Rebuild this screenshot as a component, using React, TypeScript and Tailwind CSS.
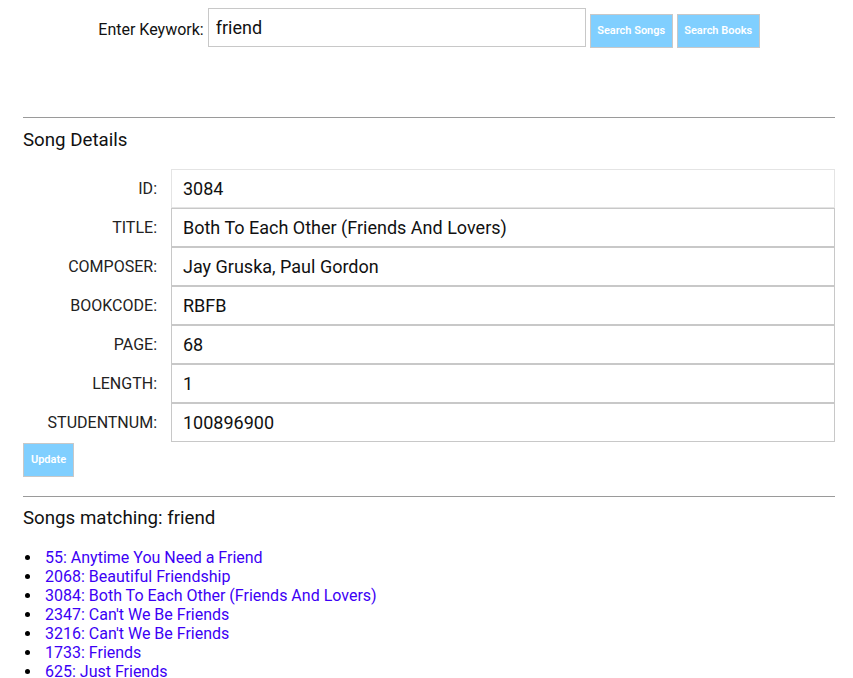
import { useState } from 'react';

const fields: [string, string][] = [
  ['ID', '3084'],
  ['TITLE', 'Both To Each Other (Friends And Lovers)'],
  ['COMPOSER', 'Jay Gruska, Paul Gordon'],
  ['BOOKCODE', 'RBFB'],
  ['PAGE', '68'],
  ['LENGTH', '1'],
  ['STUDENTNUM', '100896900'],
];

const songs = [
  '55: Anytime You Need a Friend',
  '2068: Beautiful Friendship',
  '3084: Both To Each Other (Friends And Lovers)',
  '2347: Can\'t We Be Friends',
  '3216: Can\'t We Be Friends',
  '1733: Friends',
  '625: Just Friends',
];

const btn =
  'h-[34px] px-0 whitespace-nowrap bg-[#80cfff] border border-[#c8c8c8] text-white text-[11px] font-semibold';

export default function App() {
  const [keyword, setKeyword] = useState('friend');

  return (
    <div className="min-h-screen bg-white pl-[23px] pr-[18px] text-[#111] font-['Roboto',sans-serif]">
      <div className="flex justify-center items-start pt-[8px]">
        <label className="text-[16px] mt-[10px] mr-[4px]">Enter Keywork:</label>
        <input
          value={keyword}
          onChange={(e) => setKeyword(e.target.value)}
          className="w-[378px] h-[39px] border border-[#c8c8c8] px-[7px] text-[18px] outline-none"
        />
        <button className={`${btn} ml-[4px] mt-[6px] w-[83px]`}>Search Songs</button>
        <button className={`${btn} ml-[4px] mt-[6px] w-[83px]`}>Search Books</button>
      </div>

      <hr className="mt-[69px] border-0 border-t-[1.5px] border-[#9a9a9a]" />
      <h2 className="text-[18.72px] mt-[11px] leading-[22px]">Song Details</h2>

      <div className="mt-[18px] flex flex-col">
        {fields.map(([label, value], i) => (
          <div key={label} className="flex items-center">
            <span className="w-[134px] text-right text-[16px] text-[#222]">{label}:</span>
            <input
              readOnly={i === 0}
              defaultValue={value}
              className={`ml-[14px] flex-1 h-[39px] border px-[11px] text-[18px] text-[#111] outline-none ${
                i === 0 ? 'border-[#e4e4e4]' : 'border-[#c8c8c8]'
              }`}
            />
          </div>
        ))}
      </div>

      <button className={`${btn} mt-[1px] w-[51px]`}>Update</button>

      <hr className="mt-[19px] border-0 border-t-[1.5px] border-[#9a9a9a]" />
      <h2 className="text-[18.72px] mt-[10px] leading-[22px]">Songs matching: {keyword}</h2>

      <ul className="mt-[19px] text-[16px] leading-[19px]">
        {songs.map((s) => (
          <li key={s} className="flex items-center">
            <span className="ml-[2px] w-[5px] h-[5px] rounded-full bg-black" />
            <a href="#" className="ml-[15px] text-[#3c00f5]">
              {s}
            </a>
          </li>
        ))}
      </ul>
    </div>
  );
}
